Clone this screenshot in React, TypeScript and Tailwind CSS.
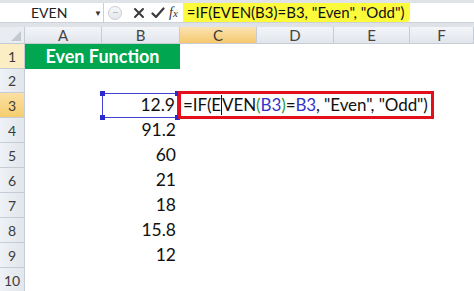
import React from "react";

const font = { fontFamily: "Lato, 'Open Sans', sans-serif" } as const;

function ColHeader({ label, w, active }: { label: string; w: number; active?: boolean }) {
  return (
    <div
      className={
        "h-full flex items-center justify-center border-r border-[#c6ccd5] text-[15px] " +
        (active
          ? "bg-gradient-to-b from-[#fbe3b0] to-[#f5c86c] text-[#3a3a3a]"
          : "bg-gradient-to-b from-[#f3f5f8] to-[#e1e6ec] text-[#444]")
      }
      style={{ width: w }}
    >
      {label}
    </div>
  );
}

function RowHeader({ n, tone }: { n: number; tone?: "pale" | "strong" }) {
  const bg =
    tone === "strong"
      ? "bg-gradient-to-b from-[#fbe0a2] to-[#f6cd6e]"
      : tone === "pale"
      ? "bg-[#fbedc4]"
      : "bg-gradient-to-r from-[#eef1f5] to-[#e2e7ed]";
  return (
    <div
      className={
        "w-[25px] shrink-0 h-full flex items-center justify-center border-b border-r border-[#c6ccd5] text-[14px] text-[#3c3c3c] " +
        bg
      }
    >
      {n}
    </div>
  );
}

const widths = [77, 78, 77, 77, 76, 64];

export default function App() {
  const values: Record<number, string> = {
    3: "12.9",
    4: "91.2",
    5: "60",
    6: "21",
    7: "18",
    8: "15.8",
    9: "12",
  };
  return (
    <div className="w-[474px] h-[291px] overflow-hidden bg-white" style={font}>
      {/* top strip */}
      <div className="h-[3px] bg-[#dfe3e8]" />
      {/* formula bar */}
      <div className="h-[19px] flex items-center bg-white">
        <div className="w-[103px] h-full flex items-center relative">
          <span className="ml-[31px] text-[14px] text-[#222] leading-none">EVEN</span>
          <span className="absolute left-[94px] top-[6px] text-[8px] text-[#333] leading-none">▼</span>
        </div>
        <div className="w-px h-full bg-[#c9ced6]" />
        <div className="w-[14px] h-[14px] ml-[4px] rounded-full border border-[#c8cdd3] bg-gradient-to-b from-[#f6f7f9] to-[#e4e7eb] flex items-center justify-center">
          <div className="w-[5px] h-px bg-[#b8bec6]" />
        </div>
        <div className="ml-[11px] flex items-center">
          <svg width="12" height="12" viewBox="0 0 12 12">
            <path d="M2 2 L10 10 M10 2 L2 10" stroke="#3a3a3a" strokeWidth="2" strokeLinecap="round" />
          </svg>
          <svg width="14" height="12" viewBox="0 0 14 12" className="ml-[6px]">
            <path d="M1.5 6.5 L5 10 L12.5 1.5" stroke="#3a3a3a" strokeWidth="2.2" fill="none" strokeLinecap="round" strokeLinejoin="round" />
          </svg>
          <span className="ml-[4px] text-[14px] italic text-[#333] leading-none" style={{ fontFamily: "'Liberation Serif', serif" }}>
            f<span className="text-[11px]">x</span>
          </span>
        </div>
        <div className="ml-[6px] w-px h-full bg-[#c9ced6]" />
        <div className="ml-[-2px] h-full bg-[#fbfb3c] flex items-center pl-[4px] pr-[5px] rounded-br-[4px]">
          <span className="text-[15px] text-[#111] leading-none whitespace-nowrap">
            =IF(EVEN(B3)=B3, "Even", "Odd")
          </span>
        </div>
      </div>
      {/* separator strip */}
      <div className="h-[5px] bg-[#dfe3e8] border-t border-[#cdd2d9]" />
      {/* column header row */}
      <div className="h-[17px] flex border-b border-[#c6ccd5]">
        <div className="w-[25px] h-full border-r border-[#c6ccd5] bg-[#e9ecf0] relative">
          <svg width="10" height="10" viewBox="0 0 10 10" className="absolute right-[3px] bottom-[2px]">
            <path d="M10 0 L10 10 L0 10 Z" fill="#c3c8cf" />
          </svg>
        </div>
        {["A", "B", "C", "D", "E", "F"].map((l, i) => (
          <ColHeader key={l} label={l} w={widths[i]} active={l === "C"} />
        ))}
      </div>
      {/* row 1 */}
      <div className="h-[25px] flex">
        <RowHeader n={1} tone="pale" />
        <div className="w-[155px] h-full bg-[#00a650] flex items-center justify-center text-white font-bold text-[18px]">
          Even Function
        </div>
      </div>
      <div className="h-[24px] flex">
        <RowHeader n={2} />
      </div>
      {[3, 4, 5, 6, 7, 8, 9, 10].map((r) => (
        <div key={r} className="h-[25px] flex relative">
          <RowHeader n={r} tone={r === 3 ? "strong" : undefined} />
          <div className="w-[77px] h-full" />
          <div
            className={
              "w-[76px] h-full flex items-center justify-end pr-[2px] text-[17.5px] text-[#111] relative " +
              (r === 3 ? "border border-[#4343d8]" : "")
            }
          >
            {values[r]}
            {r === 3 && (
              <>
                <span className="absolute -left-[3px] -top-[3px] w-[5px] h-[5px] bg-[#2a2ad0]" />
                <span className="absolute -left-[3px] -bottom-[3px] w-[5px] h-[5px] bg-[#2a2ad0]" />
                <span className="absolute -right-[3px] -top-[3px] w-[5px] h-[5px] bg-[#2a2ad0]" />
                <span className="absolute -right-[3px] -bottom-[3px] w-[5px] h-[5px] bg-[#2a2ad0]" />
              </>
            )}
          </div>
          {r === 3 && (
            <div className="absolute left-[178px] top-[-2px] w-[256px] h-[28px] border-[3px] border-[#e3101c] flex items-center pl-[2px] text-[17px] tracking-[-0.1px] text-[#111] whitespace-nowrap">
              <span>=IF(E</span>
              <span className="inline-block w-px h-[20px] bg-[#111]" />
              <span>VEN</span>
              <span className="text-[#2f9a3a]">(</span>
              <span className="text-[#3434c8]">B3</span>
              <span className="text-[#2f9a3a]">)</span>
              <span>=</span>
              <span className="text-[#3434c8]">B3</span>
              <span>, "Even", "Odd")</span>
            </div>
          )}
        </div>
      ))}
    </div>
  );
}
